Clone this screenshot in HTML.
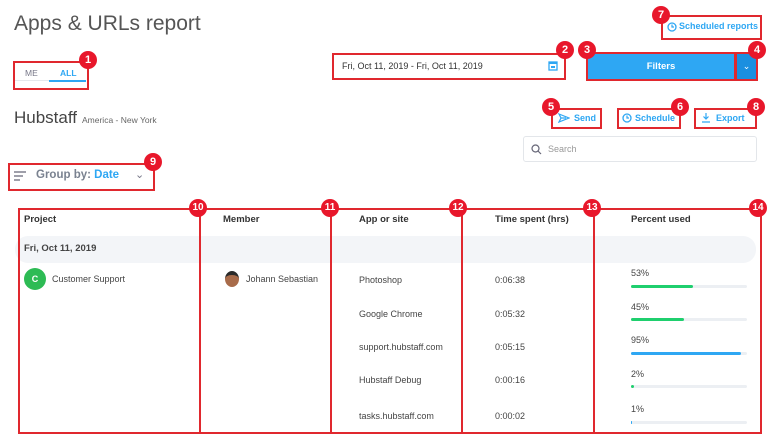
<!DOCTYPE html>
<html><head><meta charset="utf-8"><style>
*{box-sizing:border-box;margin:0;padding:0}
body{width:768px;height:443px;background:#fff;font-family:"Liberation Sans",sans-serif;position:relative;overflow:hidden;color:#333}
.a{position:absolute}
.rb{position:absolute;border:2px solid #e0282e}
.bd{position:absolute;width:18px;height:18px;border-radius:50%;background:#e8172b;color:#fff;font-size:11px;font-weight:bold;text-align:center;line-height:18px;transform:translate(-9px,-9px)}
.t{font-size:9px;color:#444;position:absolute}
.h{font-size:9.5px;color:#333;font-weight:bold;position:absolute;top:214px}
.bar{position:absolute;left:631px;width:116px;height:3px;background:#eceff3;border-radius:2px}
.bar i{display:block;height:3px;border-radius:2px}
.blue{color:#2ea7f3}
</style></head><body>
<div class="a" style="left:14px;top:12px;font-size:21px;color:#555">Apps &amp; URLs report</div>

<div class="a" style="left:15px;top:80px;width:70px;height:1px;background:#e5e8ec"></div>
<div class="a" style="left:49px;top:80px;width:37px;height:2px;background:#2ea7f3"></div>
<div class="a" style="left:25px;top:68px;font-size:8.5px;color:#778">ME</div>
<div class="a blue" style="left:60px;top:68px;font-size:8.5px;font-weight:bold">ALL</div>
<div class="rb" style="left:13px;top:61px;width:76px;height:29px"></div>
<div class="bd" style="left:88px;top:60px">1</div>

<div class="a" style="left:342px;top:61px;font-size:9px;color:#333">Fri, Oct 11, 2019 - Fri, Oct 11, 2019</div>
<svg class="a" style="left:548px;top:60px" width="10" height="11"><rect x="1" y="2" width="8" height="8" fill="none" stroke="#2ea7f3" stroke-width="1.3"/><rect x="1" y="2" width="8" height="2" fill="#2ea7f3"/><rect x="3" y="6" width="4" height="2" fill="#2ea7f3"/></svg>
<div class="rb" style="left:332px;top:53px;width:234px;height:27px"></div>
<div class="bd" style="left:565px;top:50px">2</div>

<div class="a" style="left:587px;top:53px;width:148px;height:27px;background:#2ea7f3;color:#fff;font-size:9.5px;font-weight:bold;text-align:center;line-height:27px">Filters</div>
<div class="a" style="left:736px;top:53px;width:21px;height:27px;background:#1b8fe0;color:#fff;text-align:center;font-size:9px;line-height:27px">&#8964;</div>
<div class="rb" style="left:586px;top:52px;width:150px;height:29px"></div>
<div class="rb" style="left:735px;top:52px;width:23px;height:29px"></div>
<div class="bd" style="left:587px;top:50px">3</div>
<div class="bd" style="left:757px;top:50px">4</div>

<svg class="a" style="left:667px;top:22px" width="10" height="10"><circle cx="5" cy="5" r="4" fill="none" stroke="#2ea7f3" stroke-width="1.3"/><path d="M5 2.5V5H7" fill="none" stroke="#2ea7f3" stroke-width="1.2"/></svg>
<div class="a blue" style="left:679px;top:21px;font-size:9px;font-weight:bold">Scheduled reports</div>
<div class="rb" style="left:661px;top:15px;width:101px;height:25px"></div>
<div class="bd" style="left:661px;top:15px">7</div>

<div class="a" style="left:14px;top:108px;font-size:17px;color:#444">Hubstaff</div>
<div class="a" style="left:82px;top:115px;font-size:8.5px;color:#666">America - New York</div>

<svg class="a" style="left:558px;top:113px" width="12" height="10"><path d="M1 1L11 5L1 9L3 5Z M3 5H8" fill="none" stroke="#2ea7f3" stroke-width="1.2"/></svg>
<div class="a blue" style="left:574px;top:113px;font-size:9px;font-weight:bold">Send</div>
<div class="rb" style="left:551px;top:108px;width:51px;height:21px"></div>
<div class="bd" style="left:551px;top:107px">5</div>
<svg class="a" style="left:622px;top:113px" width="10" height="10"><circle cx="5" cy="5" r="4" fill="none" stroke="#2ea7f3" stroke-width="1.3"/><path d="M5 2.5V5H7" fill="none" stroke="#2ea7f3" stroke-width="1.2"/></svg>
<div class="a blue" style="left:635px;top:113px;font-size:9px;font-weight:bold">Schedule</div>
<div class="rb" style="left:617px;top:108px;width:64px;height:21px"></div>
<div class="bd" style="left:680px;top:107px">6</div>
<svg class="a" style="left:701px;top:112px" width="10" height="11"><path d="M5 1V7M2.5 4.5L5 7L7.5 4.5M1 10H9" fill="none" stroke="#2ea7f3" stroke-width="1.2"/></svg>
<div class="a blue" style="left:716px;top:113px;font-size:9px;font-weight:bold">Export</div>
<div class="rb" style="left:694px;top:108px;width:63px;height:21px"></div>
<div class="bd" style="left:756px;top:107px">8</div>

<div class="a" style="left:523px;top:136px;width:234px;height:26px;border:1px solid #e3e6ea;border-radius:3px"></div>
<svg class="a" style="left:531px;top:144px" width="11" height="11"><circle cx="4.5" cy="4.5" r="3.5" fill="none" stroke="#667" stroke-width="1.2"/><path d="M7 7L10 10" stroke="#667" stroke-width="1.2"/></svg>
<div class="a" style="left:548px;top:144px;font-size:9px;color:#999">Search</div>

<svg class="a" style="left:14px;top:171px" width="12" height="10"><path d="M0 1H12M0 5H9M0 9H6" stroke="#667" stroke-width="1.2"/></svg>
<div class="a" style="left:36px;top:169px;font-size:11.5px;font-weight:bold;color:#7a8290">Group by: <span class="blue">Date</span></div>
<div class="a" style="left:135px;top:168px;font-size:11px;color:#778">&#8964;</div>
<div class="rb" style="left:8px;top:163px;width:147px;height:28px"></div>
<div class="bd" style="left:153px;top:162px">9</div>

<div class="a" style="left:15px;top:236px;width:741px;height:27px;background:#f3f5f8;border-radius:13px"></div>
<div class="h" style="left:24px">Project</div>
<div class="h" style="left:223px">Member</div>
<div class="h" style="left:359px">App or site</div>
<div class="h" style="left:495px">Time spent (hrs)</div>
<div class="h" style="left:631px">Percent used</div>
<div class="a" style="left:24px;top:243px;font-size:9.5px;font-weight:bold;color:#444">Fri, Oct 11, 2019</div>

<div class="a" style="left:24px;top:268px;width:22px;height:22px;border-radius:50%;background:#2dbb54;color:#fff;font-size:9px;font-weight:bold;text-align:center;line-height:22px">C</div>
<div class="t" style="left:52px;top:274px">Customer Support</div>
<div class="a" style="left:225px;top:271px;width:14px;height:16px;border-radius:50%;background:#a86b4a;border-top:4px solid #2a2a2a"></div>
<div class="t" style="left:246px;top:274px">Johann Sebastian</div>

<div class="t" style="left:359px;top:275px">Photoshop</div>
<div class="t" style="left:359px;top:309px">Google Chrome</div>
<div class="t" style="left:359px;top:342px">support.hubstaff.com</div>
<div class="t" style="left:359px;top:375px">Hubstaff Debug</div>
<div class="t" style="left:359px;top:411px">tasks.hubstaff.com</div>
<div class="t" style="left:495px;top:275px">0:06:38</div>
<div class="t" style="left:495px;top:309px">0:05:32</div>
<div class="t" style="left:495px;top:342px">0:05:15</div>
<div class="t" style="left:495px;top:375px">0:00:16</div>
<div class="t" style="left:495px;top:411px">0:00:02</div>

<div class="t" style="left:631px;top:268px">53%</div><div class="bar" style="top:285px"><i style="width:62px;background:#1fcf6e"></i></div>
<div class="t" style="left:631px;top:302px">45%</div><div class="bar" style="top:318px"><i style="width:53px;background:#1fcf6e"></i></div>
<div class="t" style="left:631px;top:335px">95%</div><div class="bar" style="top:352px"><i style="width:110px;background:#2ea7f3"></i></div>
<div class="t" style="left:631px;top:369px">2%</div><div class="bar" style="top:385px"><i style="width:3px;background:#1fcf6e"></i></div>
<div class="t" style="left:631px;top:404px">1%</div><div class="bar" style="top:421px"><i style="width:1px;background:#2ea7f3"></i></div>

<div class="rb" style="left:18px;top:208px;width:183px;height:226px"></div>
<div class="rb" style="left:199px;top:208px;width:133px;height:226px"></div>
<div class="rb" style="left:330px;top:208px;width:133px;height:226px"></div>
<div class="rb" style="left:461px;top:208px;width:134px;height:226px"></div>
<div class="rb" style="left:593px;top:208px;width:169px;height:226px"></div>
<div class="bd" style="left:198px;top:208px;font-size:10px">10</div>
<div class="bd" style="left:330px;top:208px;font-size:10px">11</div>
<div class="bd" style="left:458px;top:208px;font-size:10px">12</div>
<div class="bd" style="left:592px;top:208px;font-size:10px">13</div>
<div class="bd" style="left:758px;top:208px;font-size:10px">14</div>
</body></html>
